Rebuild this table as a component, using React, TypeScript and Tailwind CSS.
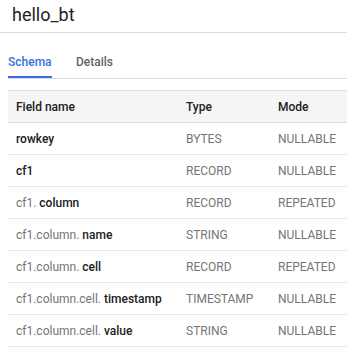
import React from "react";

const rows: { prefix?: string; name: string; type: string; mode: string }[] = [
  { name: "rowkey", type: "BYTES", mode: "NULLABLE" },
  { name: "cf1", type: "RECORD", mode: "NULLABLE" },
  { prefix: "cf1. ", name: "column", type: "RECORD", mode: "REPEATED" },
  { prefix: "cf1.column. ", name: "name", type: "STRING", mode: "NULLABLE" },
  { prefix: "cf1.column. ", name: "cell", type: "RECORD", mode: "REPEATED" },
  { prefix: "cf1.column.cell. ", name: "timestamp", type: "TIMESTAMP", mode: "NULLABLE" },
  { prefix: "cf1.column.cell. ", name: "value", type: "STRING", mode: "NULLABLE" },
];

export default function App() {
  return (
    <div
      className="w-[347px] h-[349px] overflow-hidden bg-white"
      style={{ fontFamily: "Roboto, 'Liberation Sans', sans-serif" }}
    >
      <div className="h-[33px] pl-[12px] pb-[3px] flex items-center text-[18px] text-[#212121] border-b border-[#dadce0] box-border">
        hello_bt
      </div>
      <div className="ml-[8px] flex border-b border-[#dadce0] h-[46px] box-border">
        <div className="w-[44px] flex flex-col items-start">
          <div className="flex-1 flex items-center pt-[15px] text-[12px] font-medium text-[#3b6ee0]">Schema</div>
          <div className="h-[2px] w-full bg-[#3b6ee0]" />
        </div>
        <div className="ml-[24px] flex items-center pt-[13px] text-[12px] font-medium text-[#5f6368]">
          Details
        </div>
      </div>
      <div className="ml-[8px] mt-[11px] border-t border-[#e0e0e0] w-[400px]">
        <div className="flex h-[32px] bg-[#f5f5f5] border-b border-[#dadce0] text-[12px] font-medium text-[#212121] items-center">
          <div className="w-[170px] pl-[8px]">Field name</div>
          <div className="w-[92px] pl-[8px]">Type</div>
          <div className="flex-1 pl-[8px]">Mode</div>
        </div>
        {rows.map((r, i) => (
          <div key={i} className="flex h-[32px] border-b border-[#e8e8e8] text-[12px] items-center">
            <div className="w-[170px] pl-[8px] whitespace-pre">
              {r.prefix && <span className="text-[#757575]">{r.prefix}</span>}
              <span className="font-medium text-[#212121]">{r.name}</span>
            </div>
            <div className="w-[92px] pl-[8px] text-[#757575]">{r.type}</div>
            <div className="flex-1 pl-[8px] text-[#757575]">{r.mode}</div>
          </div>
        ))}
      </div>
    </div>
  );
}
